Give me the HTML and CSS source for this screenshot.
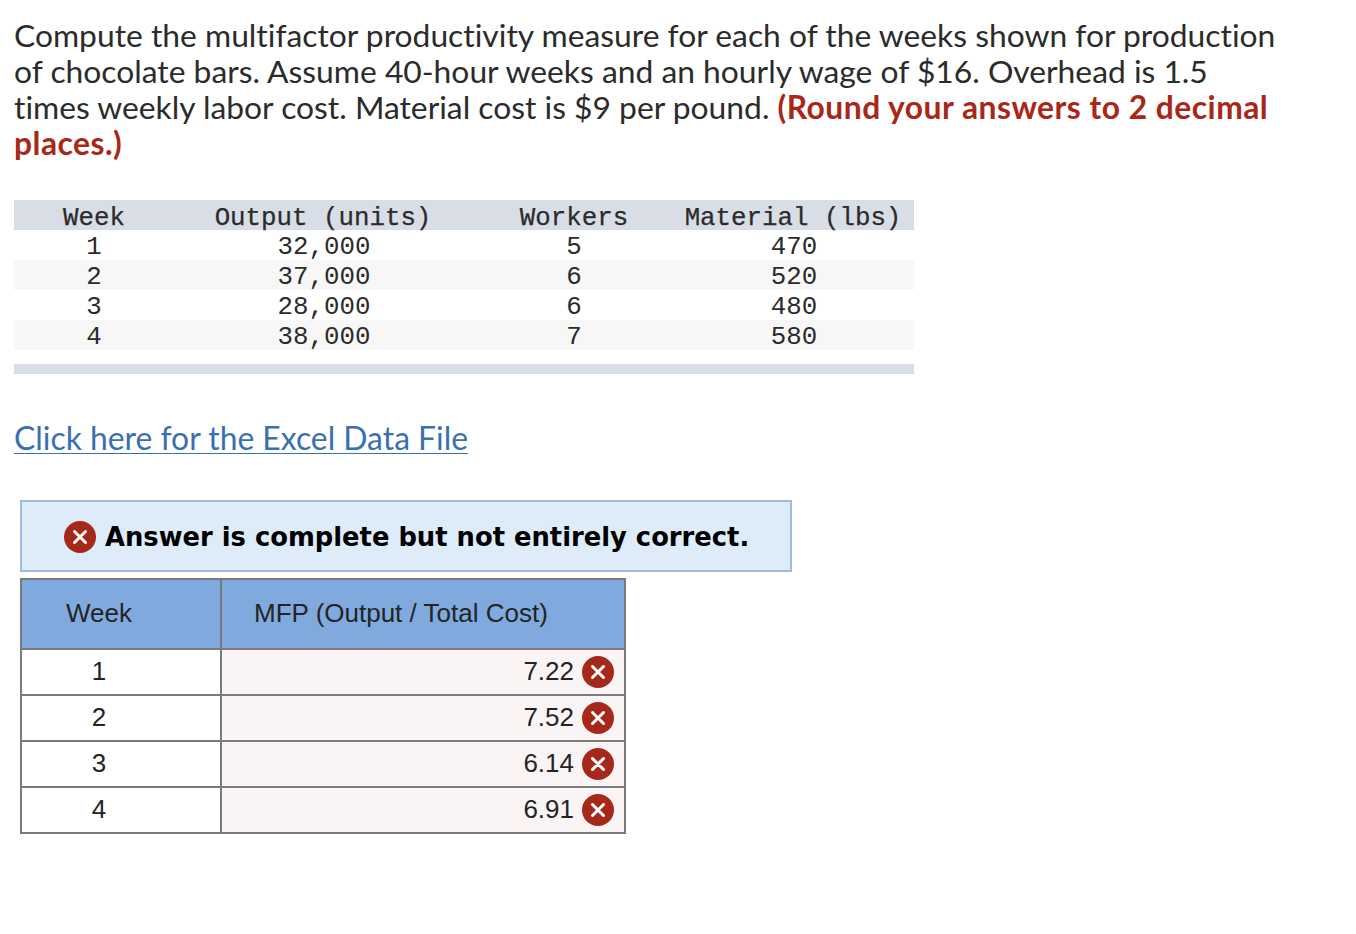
FILE: index.html
```html
<!DOCTYPE html>
<html lang="en">
<head>
<meta charset="utf-8">
<title>Multifactor productivity</title>
<link rel="stylesheet" href="styles.css">
</head>
<body>
<main class="page">
  <p class="question">Compute the multifactor productivity measure for each of the weeks shown for production of chocolate bars. Assume 40-hour weeks and an hourly wage of $16. Overhead is 1.5 times weekly labor cost. Material cost is $9 per pound. <strong class="hint">(Round your answers to 2 decimal places.)</strong></p>

  <table class="data">
    <thead>
      <tr><th>Week</th><th>Output (units)</th><th>Workers</th><th>Material (lbs)</th></tr>
    </thead>
    <tbody>
      <tr><td>1</td><td>32,000</td><td>5</td><td>470</td></tr>
      <tr><td>2</td><td>37,000</td><td>6</td><td>520</td></tr>
      <tr><td>3</td><td>28,000</td><td>6</td><td>480</td></tr>
      <tr><td>4</td><td>38,000</td><td>7</td><td>580</td></tr>
    </tbody>
  </table>
  <div class="data-foot"></div>

  <a class="file-link" href="#">Click here for the Excel Data File</a>

  <div class="status">
    <svg class="x-icon" viewBox="0 0 32 32" aria-hidden="true"><circle cx="16" cy="16" r="16"/><path d="M10.5 10.5 21.5 21.5M21.5 10.5 10.5 21.5"/></svg>
    <span>Answer is complete but not entirely correct.</span>
  </div>

  <table class="answers">
    <thead>
      <tr><th class="week-head">Week</th><th class="mfp-head">MFP (Output / Total Cost)</th></tr>
    </thead>
    <tbody>
      <tr><td class="week">1</td><td class="value"><div class="value-row"><span>7.22</span><svg class="x-icon" viewBox="0 0 32 32" aria-hidden="true"><circle cx="16" cy="16" r="16"/><path d="M10.5 10.5 21.5 21.5M21.5 10.5 10.5 21.5"/></svg></div></td></tr>
      <tr><td class="week">2</td><td class="value"><div class="value-row"><span>7.52</span><svg class="x-icon" viewBox="0 0 32 32" aria-hidden="true"><circle cx="16" cy="16" r="16"/><path d="M10.5 10.5 21.5 21.5M21.5 10.5 10.5 21.5"/></svg></div></td></tr>
      <tr><td class="week">3</td><td class="value"><div class="value-row"><span>6.14</span><svg class="x-icon" viewBox="0 0 32 32" aria-hidden="true"><circle cx="16" cy="16" r="16"/><path d="M10.5 10.5 21.5 21.5M21.5 10.5 10.5 21.5"/></svg></div></td></tr>
      <tr><td class="week">4</td><td class="value"><div class="value-row"><span>6.91</span><svg class="x-icon" viewBox="0 0 32 32" aria-hidden="true"><circle cx="16" cy="16" r="16"/><path d="M10.5 10.5 21.5 21.5M21.5 10.5 10.5 21.5"/></svg></div></td></tr>
    </tbody>
  </table>
</main>
</body>
</html>
```
FILE: styles.css
```css
* { box-sizing: border-box; }
html, body { margin: 0; background: #fff; }
.page {
  padding: 17px 0 0 14px;
  display: flex;
  flex-direction: column;
  align-items: flex-start;
  height: 934px;
  overflow: hidden;
}
.question {
  margin: 0;
  width: 1264px;
  font: 400 31.8px/36px "Lato", sans-serif;
  font-variant-ligatures: none;
  color: #2b2b2b;
}
.hint { font-weight: 700; letter-spacing: 0.48px; color: #a92719; }

.data {
  margin-top: 39px;
  width: 900px;
  table-layout: fixed;
  border-collapse: collapse;
  font: 400 25.8px/24px "Liberation Mono", monospace;
  color: #2b2b2b;
}
.data th, .data td {
  height: 30px;
  padding: 6px 0 0;
  vertical-align: top;
  text-align: center;
  font-weight: 400;
}
.data th { padding-top: 8px; line-height: 22px; -webkit-text-stroke: 0.25px #2b2b2b; }
.data th:nth-child(1) { width: 160px; }
.data th:nth-child(2) { width: 298px; }
.data th:nth-child(3) { width: 204px; }
.data th:nth-child(4) { width: 238px; padding-right: 4px; }
.data td:nth-child(2) { padding-left: 2px; }
.data td:nth-child(4) { padding-right: 2px; }
.data thead tr { background: #d8dde6; }
.data tbody tr:nth-child(even) { background: #f7f7f7; }
.data-foot { margin-top: 14px; width: 900px; height: 10px; background: #d8dde6; }

.file-link {
  margin-top: 46px;
  font: 400 31.85px/36px "Lato", sans-serif;
  font-variant-ligatures: none;
  color: #3a6fb0;
  text-decoration: underline;
  text-underline-offset: 3px;
  text-decoration-thickness: 1px;
}

.status {
  margin: 44px 0 0 6px;
  width: 772px;
  height: 72px;
  padding: 2px 0 0 42px;
  display: flex;
  align-items: center;
  gap: 9px;
  background: #deebf8;
  border: 2px solid #9dbcdc;
  font: 700 25.8px/32px "DejaVu Sans", sans-serif;
  color: #000;
}
.x-icon { width: 32px; height: 32px; flex: none; display: block; }
.x-icon circle { fill: #a5281b; }
.x-icon path { fill: none; stroke: #fff; stroke-width: 3; stroke-linecap: round; }

.answers {
  margin: 6px 0 0 6px;
  width: 606px;
  table-layout: fixed;
  border-collapse: collapse;
  border: 2px solid #7a7a7a;
  font: 400 26px/32px "Liberation Sans", sans-serif;
  color: #242424;
}
.answers th, .answers td { border: 2px solid #7a7a7a; padding: 0; font-weight: 400; }
.answers thead tr { background: #80aade; }
.answers th { height: 70px; padding-bottom: 2px; text-align: left; }
.answers th.week-head { width: 200px; padding-left: 44px; }
.answers th.mfp-head { padding-left: 32px; }
.answers td { height: 46px; }
.answers td.week { text-align: center; background: #fff; padding: 0 44px 2px 0; }
.answers td.value { background: #faf4f4; padding: 0 10px 0 0; }
.value-row { display: flex; justify-content: flex-end; align-items: center; gap: 8px; }
.value-row span { margin-bottom: 2px; }
```
